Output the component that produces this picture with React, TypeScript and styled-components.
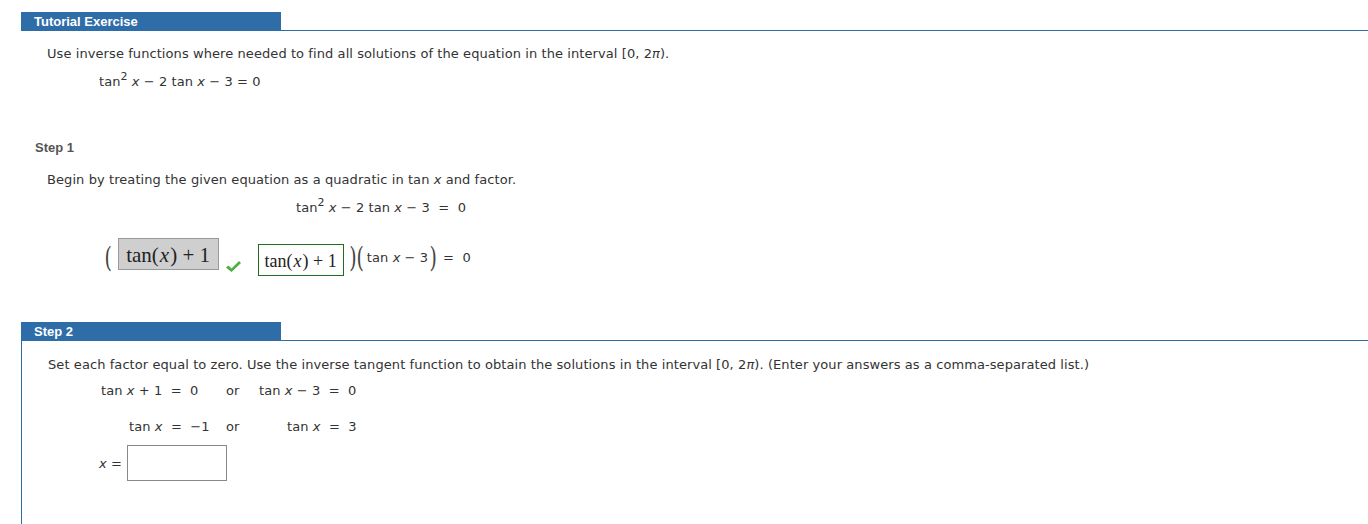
import styled, { createGlobalStyle } from "styled-components";

const GlobalStyle = createGlobalStyle`
  body {
    margin: 0;
    background: #fff;
    font-family: "DejaVu Sans", Verdana, sans-serif;
    font-size: 13px;
    letter-spacing: 0.08px;
    color: #333;
  }
`;

const BLUE = "#2e6da8";

const Page = styled.div`
  padding: 12px 0 0 21px;
`;

const HeaderRow = styled.div`
  display: flex;
  border-bottom: 1px solid ${BLUE};
`;

const Tab = styled.div`
  width: 247px;
  height: 18px;
  padding-left: 13px;
  background: ${BLUE};
  color: #fff;
  font-family: "Liberation Sans", Arial, sans-serif;
  font-weight: bold;
  font-size: 13px;
  letter-spacing: 0;
  line-height: 19px;
`;

const Section = styled.div<{ $bordered?: boolean; $top?: number }>`
  border-left: ${(p) => (p.$bordered ? `1px solid ${BLUE}` : "none")};
  padding: ${(p) => p.$top ?? 15}px 0 ${(p) => (p.$bordered ? 44 : 0)}px 26px;
`;

const Para = styled.p`
  margin: 0;
  line-height: 16px;
`;

const EqLine = styled.div<{ $indent?: number; $top?: number }>`
  margin-top: ${(p) => p.$top ?? 10}px;
  padding-left: ${(p) => p.$indent ?? 0}px;
  line-height: 16px;
  white-space: pre;
`;

const I = styled.i`
  font-style: italic;
`;

const Sup = styled.sup`
  font-size: 11px;
  line-height: 0;
  vertical-align: 6px;
`;

const StepLabel = styled.div`
  margin: 50px 0 0 14px;
  font-family: "Liberation Sans", Arial, sans-serif;
  font-weight: bold;
  font-size: 13px;
  letter-spacing: 0;
  color: #555;
`;

const Centered = styled.div`
  width: 668px;
  text-align: center;
  margin-top: 12px;
  line-height: 16px;
  white-space: pre;
`;

const FactorRow = styled.div`
  display: flex;
  align-items: center;
  margin: 19px 0 0 82px;
  height: 44px;
  white-space: pre;
`;

const Paren = styled.span`
  font-family: "DejaVu Serif", "Liberation Serif", serif;
  font-size: 27px;
  font-weight: 200;
  color: #444;
  transform: scaleX(0.7);
  display: inline-block;
  line-height: 1;
`;

const MathBox = styled.span<{ $variant: "given" | "answer" }>`
  display: inline-flex;
  align-items: center;
  justify-content: center;
  box-sizing: border-box;
  font-family: "Liberation Serif", "Times New Roman", serif;
  letter-spacing: 0;
  color: #222;
  ${(p) =>
    p.$variant === "given"
      ? `
    width: 101px; height: 32px; font-size: 21px;
    background: #cfcfcf; border: 1px solid #999;
    margin: 0 0 6px 4px;
  `
      : `
    width: 86px; height: 32px; font-size: 18px;
    background: #fff; border: 1px solid #1f6f1f;
    margin: 6px 2px 0 0;
  `}
`;

const Check = styled.svg`
  width: 17px;
  height: 13px;
  margin: 18px 16px 0 6px;
`;

const MathI = styled.i`
  font-style: italic;
  margin: 0 1px;
`;

const Inner = styled.span`
  margin-top: 2px;
`;

const Grid = styled.div`
  display: grid;
  grid-template-columns: 125px 33px 100px;
  margin: 10px 0 0 53px;
  line-height: 16px;
  white-space: pre;
`;

const Grid2 = styled(Grid)`
  grid-template-columns: 97px 61px 100px;
  margin: 20px 0 0 81px;
`;

const AnswerRow = styled.div`
  display: flex;
  align-items: center;
  gap: 5px;
  margin: 10px 0 0 51px;
`;

const AnswerInput = styled.input`
  box-sizing: border-box;
  width: 100px;
  height: 36px;
  border: 1px solid #888;
  outline: none;
`;

const Step2 = styled.div`
  margin-top: 43px;
`;

export default function App() {
  return (
    <>
      <GlobalStyle />
      <Page>
        <HeaderRow>
          <Tab>Tutorial Exercise</Tab>
        </HeaderRow>
        <Section>
          <Para>
            Use inverse functions where needed to find all solutions of the equation in the interval [0, 2<I>π</I>).
          </Para>
          <EqLine $indent={52} $top={12}>
            tan<Sup>2</Sup> <I>x</I> − 2 tan <I>x</I> − 3 = 0
          </EqLine>
        </Section>
        <StepLabel>Step 1</StepLabel>
        <Section $top={17}>
          <Para>
            Begin by treating the given equation as a quadratic in tan <I>x</I> and factor.
          </Para>
          <Centered>
            tan<Sup>2</Sup> <I>x</I> − 2 tan <I>x</I> − 3  =  0
          </Centered>
        </Section>
        <FactorRow>
          <Paren>(</Paren>
          <MathBox $variant="given">
            <Inner>
              tan(<MathI>x</MathI>) + 1
            </Inner>
          </MathBox>
          <Check viewBox="0 0 17 13">
            <path d="M1 7.5 L3.5 5.5 L6.5 8.5 L14 1 L16 3 L6.5 12 Z" fill="#4caf40" />
          </Check>
          <MathBox $variant="answer">
            <Inner>
              tan(<MathI>x</MathI>) + 1
            </Inner>
          </MathBox>
          <Paren>)(</Paren>
          <span>tan <I>x</I> − 3</span>
          <Paren>)</Paren>
          <span> =  0</span>
        </FactorRow>
        <Step2>
          <HeaderRow>
            <Tab>Step 2</Tab>
          </HeaderRow>
          <Section $bordered $top={16}>
            <Para>
              Set each factor equal to zero. Use the inverse tangent function to obtain the solutions in the interval [0, 2<I>π</I>). (Enter your answers as a comma-separated list.)
            </Para>
            <Grid>
              <span>tan <I>x</I> + 1  =  0</span>
              <span>or</span>
              <span>tan <I>x</I> − 3  =  0</span>
            </Grid>
            <Grid2>
              <span>tan <I>x</I>  =  −1</span>
              <span>or</span>
              <span>tan <I>x</I>  =  3</span>
            </Grid2>
            <AnswerRow>
              <span>
                <I>x</I> =
              </span>
              <AnswerInput />
            </AnswerRow>
          </Section>
        </Step2>
      </Page>
    </>
  );
}
